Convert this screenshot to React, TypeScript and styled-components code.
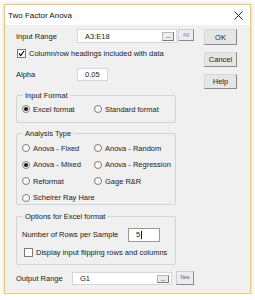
import React from 'react';
import styled, { createGlobalStyle } from 'styled-components';

const text = '#1a1a1a';
const face = '#f0f0f0';

const GlobalStyle = createGlobalStyle`
  html, body {
    margin: 0;
    padding: 0;
    background: #ffffff;
  }
  body {
    font-family: "Liberation Sans", Arial, sans-serif;
    color: ${text};
  }
`;

export default function App() {
  return (
    <>
      <GlobalStyle />
      <Window>
        <TitleBar>
          <Title>Two Factor Anova</Title>
          <CloseIcon width="9" height="9" viewBox="0 0 9 9">
            <path d="M0.5 0.5 L8.5 8.5 M8.5 0.5 L0.5 8.5" stroke="#222" strokeWidth="1" />
          </CloseIcon>
        </TitleBar>
        <Body>
          <LeftColumn>
            <Row>
              <Label $width={61}>Input Range</Label>
              <TextBox $width={101} $pad={7}>
                A3:E18
                <DropButton>_</DropButton>
              </TextBox>
              <TinyButton $width={16}>Fill</TinyButton>
            </Row>
            <CheckRow $top={5} $indent={1}>
              <CheckBox $checked>
                <svg width="7" height="7" viewBox="0 0 7 7">
                  <path d="M1 3.5 L2.8 5.5 L6 1" stroke="#111" strokeWidth="1.2" fill="none" />
                </svg>
              </CheckBox>
              <span>Column/row headings included with data</span>
            </CheckRow>
            <Row $top={10}>
              <Label $width={61}>Alpha</Label>
              <TextBox $width={31} $pad={7} $height={13}>0.05</TextBox>
            </Row>

            <Group $top={10}>
              <Legend>Input Format</Legend>
              <RadioGrid $padTop={4} $padBottom={8}>
                <Radio checked label="Excel format" />
                <Radio label="Standard format" />
              </RadioGrid>
            </Group>

            <Group $top={6}>
              <Legend>Analysis Type</Legend>
              <RadioGrid $padTop={5} $padBottom={1} $gap={6.5}>
                <Radio label="Anova - Fixed" />
                <Radio label="Anova - Random" />
                <Radio checked label="Anova - Mixed" />
                <Radio label="Anova - Regression" />
                <Radio label="Reformat" />
                <Radio label="Gage R&amp;R" />
                <Radio label="Scheirer Ray Hare" />
              </RadioGrid>
            </Group>

            <Group $top={7}>
              <Legend>Options for Excel format</Legend>
              <GroupInner>
                <Row>
                  <Label $width={106}>Number of Rows per Sample</Label>
                  <TextBox $width={32} $pad={7} $focused>
                    5<Caret />
                  </TextBox>
                </Row>
                <CheckRow $top={6} $indent={2}>
                  <CheckBox />
                  <span>Display input flipping rows and columns</span>
                </CheckRow>
              </GroupInner>
            </Group>

            <Row $top={7}>
              <Label $width={56}>Output Range</Label>
              <TextBox $width={100} $pad={7} $height={13}>
                G1
                <DropButton>_</DropButton>
              </TextBox>
              <TinyButton $width={18} $blue $gapLeft={4} $height={14}>New</TinyButton>
            </Row>
          </LeftColumn>

          <RightColumn>
            <PushButton $height={16}>OK</PushButton>
            <PushButton $top={7}>Cancel</PushButton>
            <PushButton $top={7}>Help</PushButton>
          </RightColumn>
        </Body>
      </Window>
    </>
  );
}

function Radio({ label, checked }: { label: string; checked?: boolean }) {
  return (
    <RadioItem>
      <RadioCircle>{checked && <RadioDot />}</RadioCircle>
      <span dangerouslySetInnerHTML={{ __html: label }} />
    </RadioItem>
  );
}

const Window = styled.div`
  margin: 4px 0 0 4px;
  width: 245px;
  height: 288px;
  border: 1px solid #f1c778;
  background: ${face};
  box-shadow: 0 0 5px rgba(0, 0, 0, 0.18);
  display: flex;
  flex-direction: column;
`;

const TitleBar = styled.div`
  height: 20px;
  background: #ffffff;
  display: flex;
  align-items: center;
  justify-content: space-between;
  padding: 0 7px 0 3px;
`;

const Title = styled.span`
  font-family: "Liberation Sans", Arial, sans-serif;
  font-size: 8px;
  color: #111;
  margin-top: 1px;
`;

const CloseIcon = styled.svg`
  display: block;
  margin-top: 1px;
`;

const Body = styled.div`
  display: flex;
  padding: 4px 0 0 11px;
  font-size: 7.5px;
`;

const LeftColumn = styled.div`
  width: 178px;
  display: flex;
  flex-direction: column;
`;

const RightColumn = styled.div`
  margin-left: 10px;
  width: 33px;
  display: flex;
  flex-direction: column;
`;

const Row = styled.div<{ $top?: number }>`
  display: flex;
  align-items: center;
  margin-top: ${(p) => p.$top ?? 0}px;
`;

const Label = styled.span<{ $width: number }>`
  width: ${(p) => p.$width}px;
  flex: none;
  white-space: nowrap;
`;

const TextBox = styled.div<{ $width: number; $pad: number; $height?: number; $focused?: boolean }>`
  position: relative;
  box-sizing: border-box;
  width: ${(p) => p.$width}px;
  height: ${(p) => p.$height ?? 14}px;
  background: #ffffff;
  border: 1px solid ${(p) => (p.$focused ? '#9a9a9a' : '#d6d6d6')};
  padding-left: ${(p) => p.$pad}px;
  display: flex;
  align-items: center;
  white-space: nowrap;
`;

const Caret = styled.span`
  display: inline-block;
  width: 1px;
  height: 8px;
  background: #111;
  margin-left: 1px;
`;

const DropButton = styled.span`
  position: absolute;
  right: 2px;
  top: 2px;
  bottom: 1px;
  width: 12px;
  box-sizing: border-box;
  background: #ececec;
  border: 1px solid #b8b8b8;
  border-right-color: #7a7a7a;
  border-bottom-color: #7a7a7a;
  font-size: 8px;
  font-weight: bold;
  line-height: 4px;
  text-align: center;
  color: #111;
`;

const TinyButton = styled.div<{ $width: number; $blue?: boolean; $gapLeft?: number; $height?: number }>`
  box-sizing: border-box;
  width: ${(p) => p.$width}px;
  height: ${(p) => p.$height ?? 12}px;
  margin-left: ${(p) => p.$gapLeft ?? 1}px;
  align-self: flex-start;
  margin-top: ${(p) => (p.$blue ? -1 : 0)}px;
  background: #ececec;
  border: 1px solid #cfcfcf;
  border-right-color: #8a8a8a;
  border-bottom-color: #8a8a8a;
  font-size: 4.5px;
  color: ${(p) => (p.$blue ? '#3b5c9a' : '#6a7fa8')};
  display: flex;
  align-items: center;
  justify-content: center;
`;

const CheckRow = styled.div<{ $top?: number; $indent?: number }>`
  display: flex;
  align-items: center;
  gap: 3px;
  height: 10px;
  margin-top: ${(p) => p.$top ?? 0}px;
  padding-left: ${(p) => p.$indent ?? 0}px;
  white-space: nowrap;
`;

const CheckBox = styled.span<{ $checked?: boolean }>`
  box-sizing: border-box;
  width: 9px;
  height: 9px;
  background: #ffffff;
  border: 1px solid #7a7a7a;
  display: flex;
  align-items: center;
  justify-content: center;
`;

const Group = styled.fieldset<{ $top: number }>`
  margin: ${(p) => p.$top}px 0 0 0;
  width: 160px;
  box-sizing: border-box;
  padding: 0;
  border: 1px solid #d4d4d4;
  border-radius: 2px;
  min-width: 0;
`;

const Legend = styled.legend`
  margin-left: 6px;
  padding: 0 2px;
  line-height: 9px;
  font-size: 7.5px;
`;

const GroupInner = styled.div`
  padding: 7px 0 6px 5px;
`;

const RadioGrid = styled.div<{ $padTop: number; $padBottom: number; $gap?: number }>`
  display: grid;
  grid-template-columns: 72px 1fr;
  grid-auto-rows: 10px;
  row-gap: ${(p) => p.$gap ?? 0}px;
  padding: ${(p) => p.$padTop}px 0 ${(p) => p.$padBottom}px 5px;
`;

const RadioItem = styled.div`
  display: flex;
  align-items: center;
  gap: 3px;
  white-space: nowrap;
`;

const RadioCircle = styled.span`
  box-sizing: border-box;
  width: 8px;
  height: 8px;
  border-radius: 50%;
  border: 1px solid #7a7a7a;
  background: #ffffff;
  display: flex;
  align-items: center;
  justify-content: center;
  flex: none;
`;

const RadioDot = styled.span`
  width: 4px;
  height: 4px;
  border-radius: 50%;
  background: #111;
`;

const PushButton = styled.div<{ $top?: number; $height?: number }>`
  box-sizing: border-box;
  height: ${(p) => p.$height ?? 15}px;
  margin-top: ${(p) => p.$top ?? 0}px;
  background: #e6e6e6;
  border: 1px solid #d8d8d8;
  border-right-color: #8a8a8a;
  border-bottom-color: #8a8a8a;
  display: flex;
  align-items: center;
  justify-content: center;
  font-size: 7.5px;
`;
